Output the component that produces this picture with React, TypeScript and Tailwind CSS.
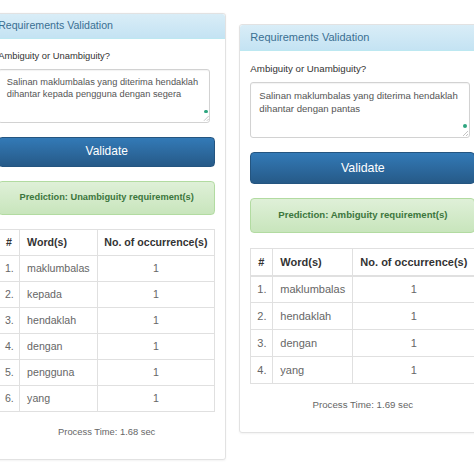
import React from 'react';

type PanelProps = {
  text: string;
  prediction: string;
  words: string[];
  time: string;
};

function Panel({ text, prediction, words, time }: PanelProps) {
  return (
    <div className="w-[247px] bg-white border border-[#e2e2e2] rounded-[3px] shadow-[0_1px_2px_rgba(0,0,0,0.05)]">
      <div className="h-[26px] flex items-center px-[10px] bg-gradient-to-b from-[#d9edf7] to-[#c4e3f3] border-b border-[#bce8f1] rounded-t-[3px] text-[11px] text-[#3a6f92]">
        Requirements Validation
      </div>
      <div className="px-[10px] pt-[12px] pb-[21px]">
        <div className="h-[12px] leading-[12px] text-[9.7px] text-[#333]">Ambiguity or Unambiguity?</div>
        <div className="relative mt-[7px] w-[220px] h-[56px]">
          <textarea
            readOnly
            defaultValue={text}
            className="block w-full h-full resize-none border border-[#d2d2d2] rounded-[3px] pl-[8px] pr-[4px] pt-[6px] text-[9.6px] leading-[13px] text-[#555] bg-white shadow-[inset_0_1px_1px_rgba(0,0,0,0.05)] outline-none"
          />
          <span className="absolute left-[213px] top-[42px] w-[4px] h-[4px] rounded-full bg-[#2ea57f]" />
          <svg className="absolute right-[2px] bottom-[2px]" width="6" height="6" viewBox="0 0 6 6">
            <path d="M6 1 L1 6 M6 4 L4 6" stroke="#b5b5b5" strokeWidth="0.8" />
          </svg>
        </div>
        <button className="mt-[14px] w-[225px] h-[32px] flex items-center justify-center rounded-[4px] border border-[#245580] bg-gradient-to-b from-[#337ab7] to-[#265a88] text-white text-[12.4px]">
          Validate
        </button>
        <div className="mt-[14px] w-[225px] h-[35px] flex items-center justify-center rounded-[4px] border border-[#b2dba1] bg-gradient-to-b from-[#dff0d8] to-[#c8e5bc] text-[9.6px] font-bold text-[#3c763d]">
          Prediction: {prediction}
        </div>
        <table className="mt-[15px] w-[225px] table-fixed border border-[#e0e0e0] text-[11px]">
          <thead>
            <tr className="h-[27px] border-b-2 border-[#e0e0e0]">
              <th className="w-[22px] border-r border-[#e0e0e0] pl-[7px] text-left font-bold text-[#333]">#</th>
              <th className="w-[80px] border-r border-[#e0e0e0] pl-[7px] text-left font-bold text-[#333]">Word(s)</th>
              <th className="text-center font-bold text-[#333]">No. of occurrence(s)</th>
            </tr>
          </thead>
          <tbody>
            {words.map((w, i) => (
              <tr key={w} className="h-[27px] border-t border-[#e0e0e0]">
                <td className="border-r border-[#e0e0e0] pl-[6px] text-[#666]">{i + 1}.</td>
                <td className="border-r border-[#e0e0e0] pl-[7px] text-[#666]">{w}</td>
                <td className="text-center text-[#666]">1</td>
              </tr>
            ))}
          </tbody>
        </table>
        <div className="mt-[15px] h-[12px] leading-[12px] text-center text-[9.7px] text-[#666]">Process Time: {time}</div>
      </div>
    </div>
  );
}

export default function App() {
  return (
    <div className="w-[474px] h-[474px] overflow-hidden bg-white font-['Liberation_Sans',Arial,sans-serif]">
      <div className="flex items-start -ml-[12.5px]">
        <div className="mt-[13px] shrink-0">
          <div className="[zoom:0.965]">
            <Panel
              text="Salinan maklumbalas yang diterima hendaklah dihantar kepada pengguna dengan segera"
              prediction="Unambiguity requirement(s)"
              words={['maklumbalas', 'kepada', 'hendaklah', 'dengan', 'pengguna', 'yang']}
              time="1.68 sec"
            />
          </div>
        </div>
        <div className="ml-[13.5px] mt-[24px] shrink-0">
          <Panel
            text="Salinan maklumbalas yang diterima hendaklah dihantar dengan pantas"
            prediction="Ambiguity requirement(s)"
            words={['maklumbalas', 'hendaklah', 'dengan', 'yang']}
            time="1.69 sec"
          />
        </div>
      </div>
    </div>
  );
}
